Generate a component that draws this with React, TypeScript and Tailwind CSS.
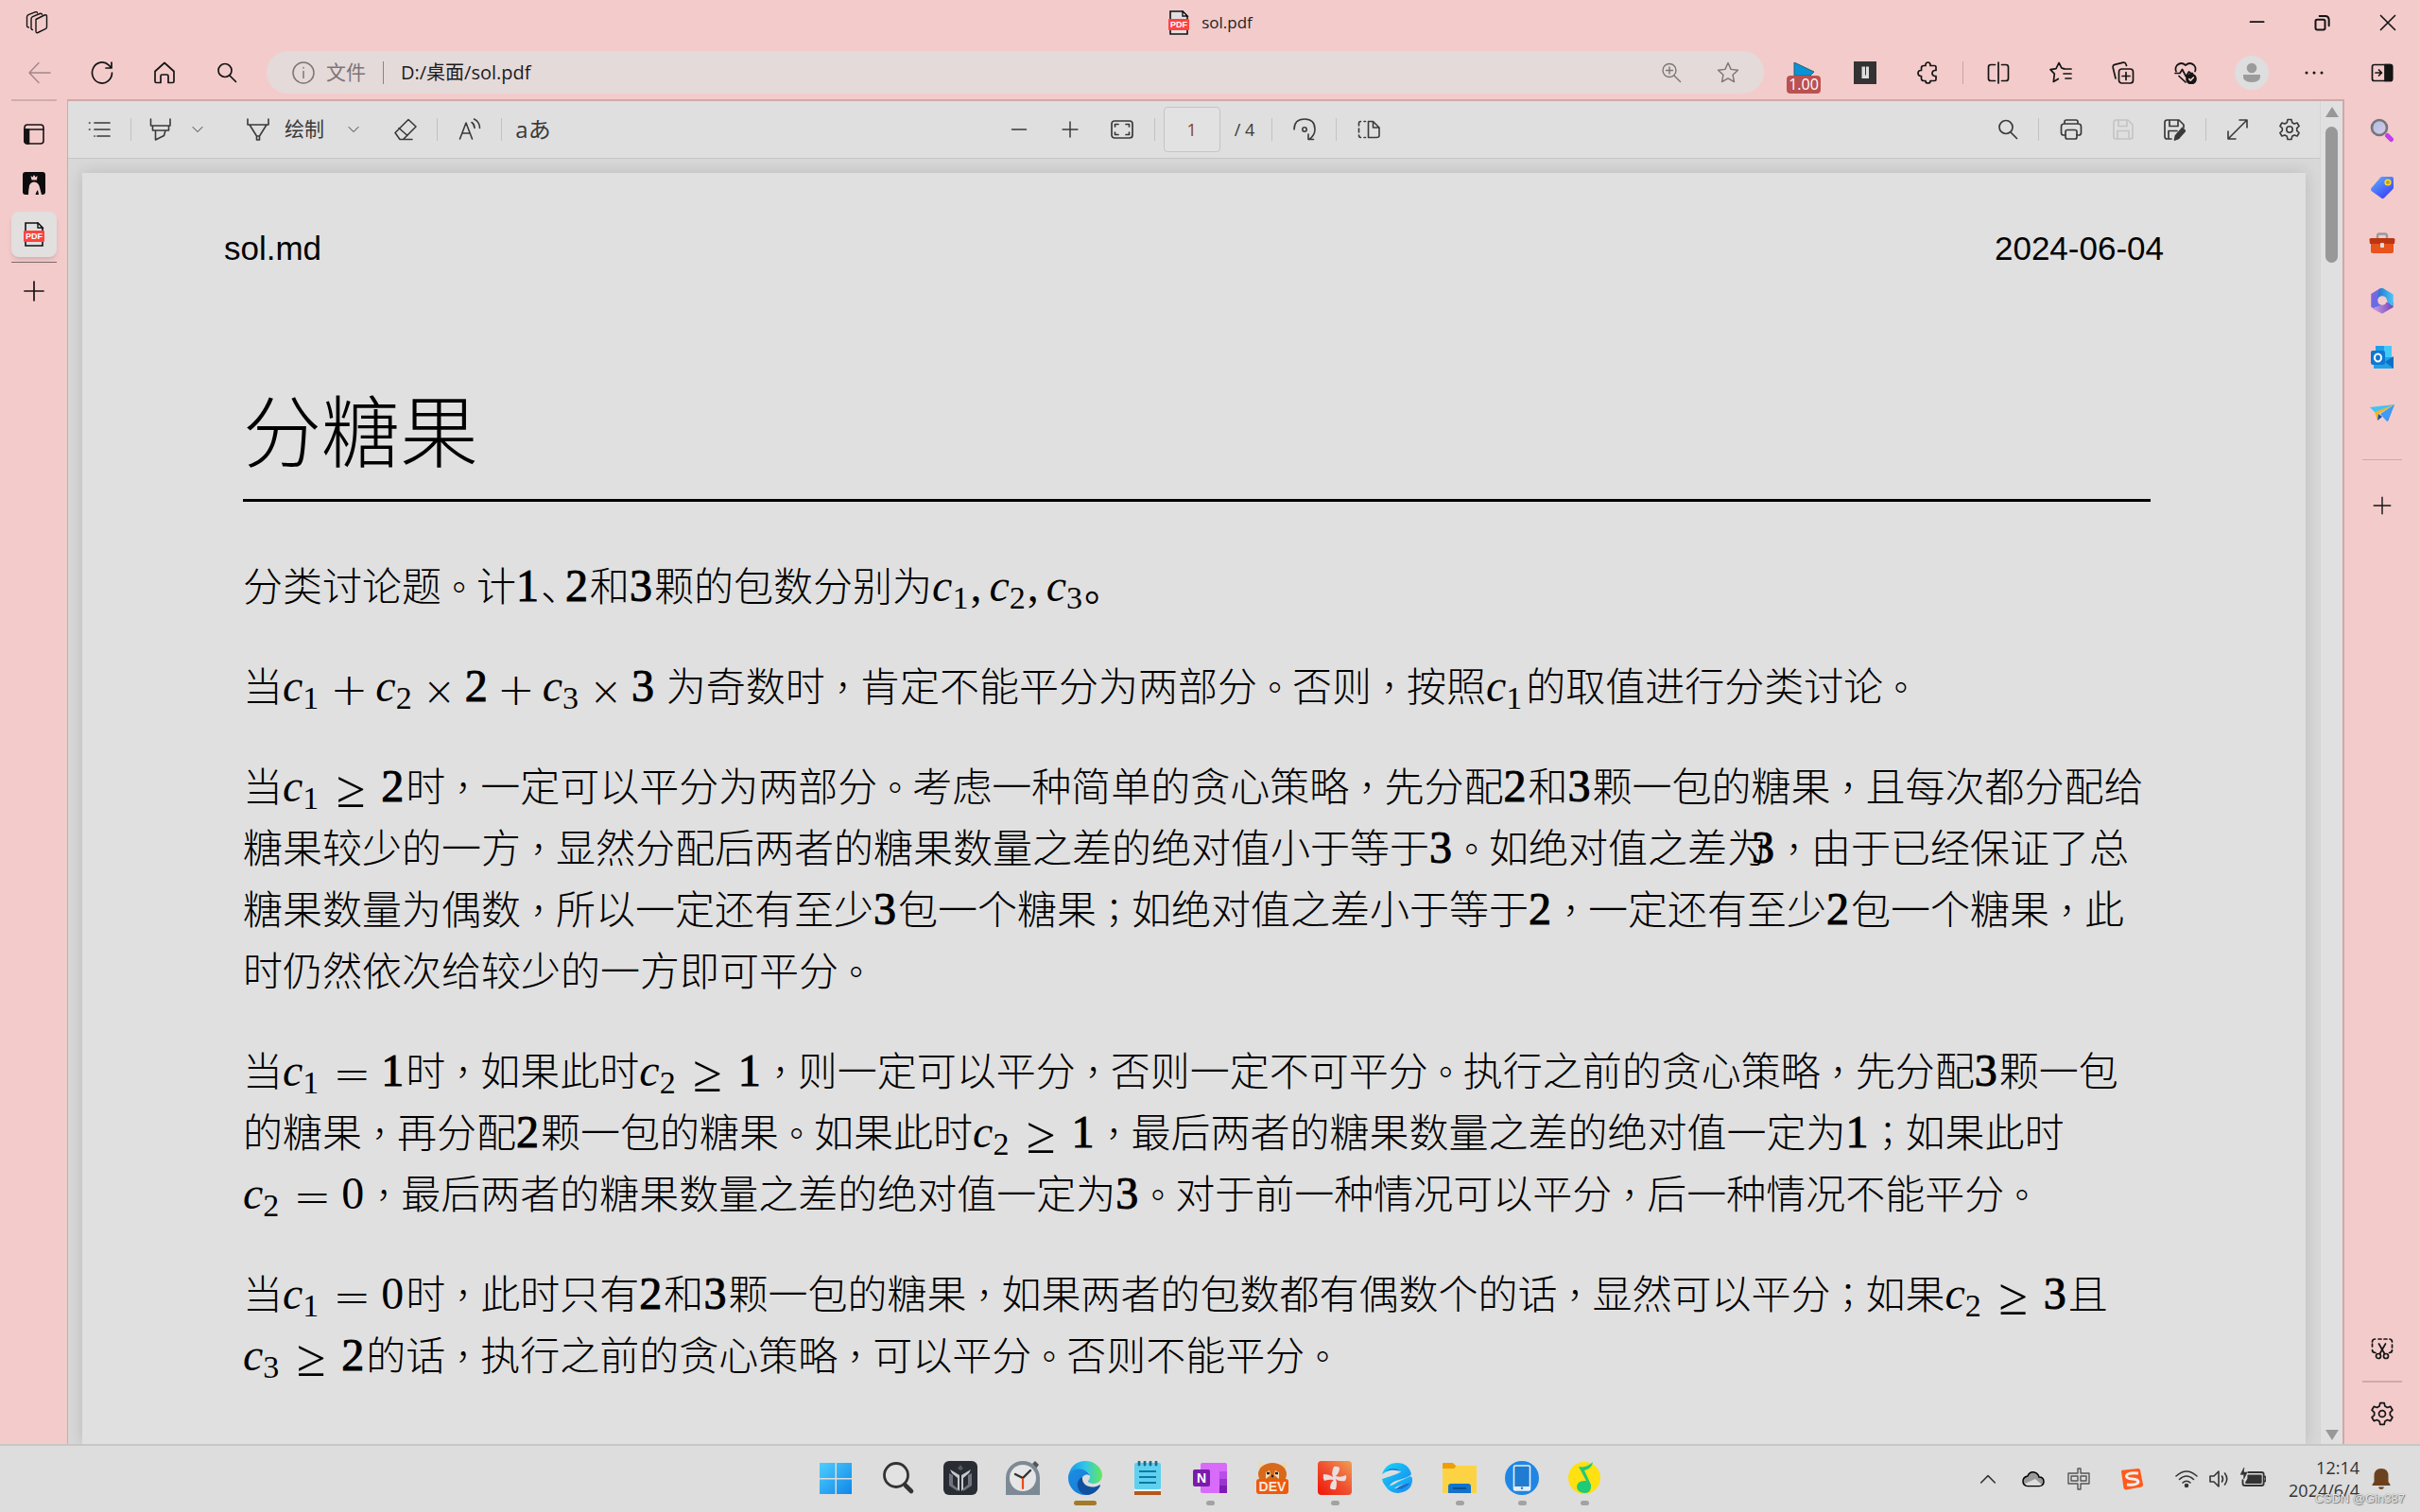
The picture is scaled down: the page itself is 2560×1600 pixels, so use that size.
import React from "react";

type IconProps = { children: React.ReactNode; size?: string; sw?: number; box?: string };

function Icon({ children, size = "size-6", sw = 1.4, box = "0 0 24 24" }: IconProps) {
  return (
    <svg viewBox={box} className={`${size} shrink-0`} fill="none" stroke="currentColor" strokeWidth={sw} strokeLinecap="round" strokeLinejoin="round" aria-hidden="true">
      {children}
    </svg>
  );
}

function Btn({ label, className, children }: { label: string; className: string; children: React.ReactNode }) {
  return (
    <button type="button" aria-label={label} className={`flex shrink-0 items-center justify-center ${className}`}>
      {children}
    </button>
  );
}

const Rule = ({ className }: { className: string }) => <span className={`shrink-0 ${className}`} />;

function PdfIcon() {
  return (
    <svg viewBox="0 0 24 26" className="h-[26px] w-6 shrink-0" aria-hidden="true">
      <path d="M3 1h13l5 5v19H3z" fill="#e0e0e0" stroke="#111" strokeWidth="1.6" />
      <path d="M16 1v5h5z" fill="#fff" stroke="#111" strokeWidth="1.4" />
      <rect x="1" y="9" width="22" height="12" rx="1" fill="#ff4340" />
      <text x="12" y="18.4" textAnchor="middle" fontSize="9" fontWeight="700" fill="#fff" fontFamily="Liberation Sans">PDF</text>
    </svg>
  );
}

const SearchGlyph = () => (
  <>
    <circle cx="10" cy="9.5" r="7" />
    <path d="M15 15l6.500 6.500" />
  </>
);

const Gear = () => (
  <>
    <path d="M10 1.500h4l.7 3.200 2.300 1.300 3.100-1 2 3.500-2.400 2.200v2.600l2.400 2.200-2 3.500-3.100-1-2.300 1.300-.7 3.200h-4l-.7-3.200L7 18l-3.100 1-2-3.500 2.400-2.200v-2.600L1.900 8.500l2-3.500L7 6l2.300-1.300z" />
    <circle cx="12" cy="12" r="3.200" />
  </>
);

const Star = () => <path d="M12 1.500l3.100 6.900 7.400.8-5.500 5 1.500 7.400L12 17.900l-6.500 3.700L7 14.200l-5.500-5 7.400-.8z" />;

function TitleBar() {
  return (
    <header className="grid h-12 shrink-0 grid-cols-[1fr_auto_1fr] items-center px-[6px] pr-0">
      <Btn label="工作区" className="h-12 w-[66px]">
        <Icon>
          <path d="M11 8.500l9-4.500q2.500-.8 2.500 1.500v11q0 1.500-1.500 2.200L13 22.500q-2 .8-2-1.500z" />
          <path d="M7.500 19.500q-1.500 0-1.500-2V8q0-1.500 1.500-2.300L15 2.500q2-.8 2.500.8M3.500 17Q1.500 17 1.500 15V6q0-1.500 1.500-2.300L10 .8q2-.8 2.500.8" />
        </Icon>
      </Btn>
      <div className="flex items-center justify-center gap-3 pr-[6px]">
        <PdfIcon />
        <h1 className="text-[17px] font-normal text-[#222]">sol.pdf</h1>
      </div>
      <div className="flex justify-end">
        <Btn label="最小化" className="h-12 w-[69px]"><Icon sw={2} size="size-5"><path d="M3 11h17" /></Icon></Btn>
        <Btn label="还原" className="h-12 w-[69px]">
          <Icon sw={2.4} size="size-5"><rect x="3" y="8" width="12" height="13" rx="2" /><path d="M8 3.500h7q5 0 5 5V16" /></Icon>
        </Btn>
        <Btn label="关闭" className="h-12 w-[69px]"><Icon sw={2} size="size-5"><path d="M3 3l18 18M21 3L3 21" /></Icon></Btn>
      </div>
    </header>
  );
}

function AddressRow() {
  return (
    <nav className="flex h-[57px] shrink-0 items-center pr-[7px] pl-[9px]">
      <Btn label="后退" className="h-11 w-[66px] text-[#a28789]"><Icon><path d="M23 12H1M11 1.500L1 12l10 10.500" /></Icon></Btn>
      <Btn label="刷新" className="h-11 w-[66px]"><Icon sw={1.7}><path d="M22.500 12A10.500 11 0 1 1 19 3.800l2.500 2.700M22 1v6h-6" /></Icon></Btn>
      <Btn label="主页" className="h-11 w-[66px]"><Icon sw={1.7}><path d="M2 10.500L12 1.500l10 9V21q0 1.500-1.500 1.500H16v-7q0-1.500-1.500-1.500h-5Q8 14 8 15.500v7H3.500Q2 22.500 2 21z" /></Icon></Btn>
      <Btn label="搜索" className="h-11 w-[66px]"><Icon sw={1.7}><SearchGlyph /></Icon></Btn>
      <div className="ml-[9px] flex h-[45px] flex-1 items-center rounded-full bg-[#e4dada] pr-1 pl-[27px] text-[#7d7475]">
        <Icon sw={1.5}><circle cx="12" cy="12" r="11" /><path d="M12 10.500v7M12 6.500v.4" /></Icon>
        <span className="ml-3 text-[21px]">文件</span>
        <Rule className="mx-[18px] h-6 w-px bg-[#8c8283]" />
        <input aria-label="地址" defaultValue="D:/桌面/sol.pdf" className="min-w-0 flex-1 bg-transparent text-xl text-[#1b1b1b] outline-none" />
        <Btn label="缩放" className="h-11 w-[60px]"><Icon><SearchGlyph /><path d="M10 6v7M6.500 9.500h7" /></Icon></Btn>
        <Btn label="收藏此页" className="mr-1 h-11 w-[60px]"><Icon><Star /></Icon></Btn>
      </div>
      <Btn label="视频速度" className="ml-[10px] h-12 w-[64px] flex-col">
        <svg viewBox="0 0 22 14" className="mt-3 h-[14px] w-[22px] shrink-0" aria-hidden="true"><path d="M1 0l21 10-4 4H1z" fill="#0a93d4" stroke="#25607c" /></svg>
        <span className="rounded bg-[#bb5151] px-[2px] text-base leading-[19px] text-white">1.00</span>
      </Btn>
      <Btn label="扩展 L" className="h-11 w-[66px]">
        <svg viewBox="0 0 24 24" className="size-6 shrink-0" aria-hidden="true"><rect width="24" height="24" fill="#333" /><path d="M8.500 5.500h3.500v9h1v-9h3V18H8.500z" fill="#ddd" /></svg>
      </Btn>
      <Btn label="扩展" className="h-11 w-[66px]">
        <Icon sw={1.7}><path d="M8 4.500h2v-.7Q10 1 12.500 1T15 3.800v.7h4.500Q21 4.500 21 6v3.500h-1.500q-2.500.5-2.500 3t2.500 3H21V19q0 1.500-1.500 1.500H15v.5q0 2-2.500 2T10 21v-.5H8Q5.500 20.500 5.500 18v-2.500H4.800Q2 15.500 2 12.500t2.800-3h.7V7q0-2.500 2.500-2.500z" /></Icon>
      </Btn>
      <Rule className="mx-1 h-6 w-px bg-[#c3a5a6]" />
      <Btn label="分屏" className="h-11 w-[66px]">
        <Icon sw={1.7}><path d="M12 1v22M8.500 3.500H4q-2.500 0-2.500 2.500v12Q1.500 20.500 4 20.500h4.500M15.500 3.500H20q2.500 0 2.500 2.500v12q0 2.500-2.500 2.500h-4.500" /></Icon>
      </Btn>
      <Btn label="收藏夹" className="h-11 w-[66px]">
        <Icon sw={1.7}><path d="M15.500 7.500l-2.500-.3-3-5.700-3 6.200-6 .9 4.300 4.600-1 8.300 5-3M15 8h8M15 13h8M17 18h6" /></Icon>
      </Btn>
      <Btn label="集锦" className="h-11 w-[66px]">
        <Icon sw={1.7}><rect x="7.500" y="8" width="15" height="15" rx="3" /><path d="M15 11.500v8M11 15.500h8M4 18L1.200 6.500Q.8 4 3 3.400L12 1.200q2.500-.4 3 1.800l.5 1.500" /></Icon>
      </Btn>
      <Btn label="浏览器概要" className="mr-1 h-11 w-[66px]">
        <Icon sw={1.7}><path d="M2 10.500Q.5 7 3 4q4.500-4 9 0 4.500-4 9 0 2.500 3 1 6.500M1 12.500h5l2.500-4 4 7.500 3-5 2 1.500h2M5 15.500l7 6.500" /><circle cx="18" cy="18.500" r="5" fill="currentColor" /><path d="M15.800 18.700l1.500 1.500 3-3.200" stroke="#f4cbcb" /></Icon>
      </Btn>
      <Btn label="个人资料" className="h-11 w-[66px]">
        <svg viewBox="0 0 36 36" className="size-9 shrink-0" aria-hidden="true"><circle cx="18" cy="18" r="18" fill="#dedede" /><circle cx="18" cy="13" r="5.300" fill="#9b9b9b" /><path d="M9 20h18q1 8-9 8t-9-8z" fill="#9b9b9b" /></svg>
      </Btn>
      <Btn label="设置及其他" className="h-11 w-[66px]"><Icon sw={3}><path d="M4 12h.01M12 12h.01M20 12h.01" /></Icon></Btn>
      <Btn label="侧边栏" className="ml-[6px] h-11 w-[66px]">
        <Icon sw={1.7}><rect x="1.500" y="3.500" width="21" height="17" rx="2" /><path d="M15 3.500h6q1.500 0 1.500 2v13q0 2-1.500 2h-6z" fill="currentColor" /><path d="M5 12h6M8.500 9l3 3-3 3" /></Icon>
      </Btn>
    </nav>
  );
}

function TabStrip() {
  return (
    <aside className="flex w-[71px] shrink-0 flex-col items-center">
      <Rule className="h-[2px] w-12 bg-[#d0adad]" />
      <Btn label="垂直标签页" className="mt-[9px] h-[52px] w-12">
        <Icon sw={1.6}><rect x="2" y="2" width="20" height="20" rx="3" /><path d="M2 7h20" /><path d="M2 7h4.500v15H5q-3 0-3-3z" fill="currentColor" /></Icon>
      </Btn>
      <Btn label="标签页" className="h-[52px] w-12">
        <svg viewBox="0 0 24 24" className="size-6 shrink-0" aria-hidden="true"><rect width="24" height="24" rx="3" fill="#0c0c0c" /><path d="M6 24q0-5 1-9 .5-4 5-4.500 5 .5 6 6l2 7.500h-3l-1-5q-2 2-2.500 5z M6 24l1-10h5v3l-3 7z M8.500 4l2 1.500L12 3l1.500 2.500L15.500 4 15 8.500H9.500z" fill="#f4cbcb" /></svg>
      </Btn>
      <Btn label="sol.pdf" className="mt-1 h-12 w-12 rounded-lg bg-[#e2dfdf] shadow-md"><PdfIcon /></Btn>
      <Rule className="mt-[5px] h-px w-12 bg-[#82696a]" />
      <Btn label="新建标签页" className="mt-1 h-[52px] w-12"><Icon sw={1.7}><path d="M12 2v20M2 12h20" /></Icon></Btn>
    </aside>
  );
}

const Sep = () => <Rule className="h-6 w-px bg-[#c2c2c2]" />;
const Chevron = () => <Icon size="size-3" sw={2}><path d="M2 7l10 10L22 7" /></Icon>;

function PdfToolbar() {
  return (
    <div className="flex h-[61px] w-full shrink-0 items-center border-b border-[#c6c6c6] bg-[#dfdfdf] text-[#3a3a3a]">
      <div className="flex flex-1 items-center">
        <Btn label="目录" className="h-12 w-[66px]"><Icon sw={1.7}><path d="M7 5h16M7 12h16M10 19h13M1.500 5h.5M1.500 12h.5M7 19h.2" /></Icon></Btn>
        <Sep />
        <Btn label="突出显示" className="h-12 w-[62px]">
          <Icon sw={1.6}><path d="M1.500 1v7H22V1M3.500 8.500v4.500h17V8.500M6.500 13v10l9-4.500 1.500-5.500" /></Icon>
        </Btn>
        <Btn label="突出显示选项" className="h-12 w-4"><Chevron /></Btn>
        <Btn label="绘制" className="ml-[44px] h-12 gap-[16px] text-[21px]">
          <Icon sw={1.6}><path d="M1 1v6h22V1M3 7l7.500 12h3L21 7M10.500 19v4h3v-4" /></Icon>
          <span>绘制</span>
        </Btn>
        <Btn label="绘制选项" className="ml-[21px] h-12 w-5"><Chevron /></Btn>
        <Btn label="擦除" className="ml-3 h-12 w-[66px]"><Icon sw={1.6}><path d="M15 1.500L23 9 9.500 22.500H6L1 15.500zM5 10.500l9 8M9 22.500h10" /></Icon></Btn>
        <Sep />
        <Btn label="大声朗读" className="h-12 w-[67px]"><Icon sw={1.6}><path d="M1.500 22L8 5l6.500 17M4 16h8M14 4.500q3 2 3 6M16.500 1q6 3 6 9.500" /></Icon></Btn>
        <Sep />
        <Btn label="翻译" className="h-12 w-[66px] text-2xl"><span>aあ</span></Btn>
      </div>
      <div className="flex items-center pl-[6px]">
        <Btn label="缩小" className="h-12 w-[54px]"><Icon size="size-5" sw={1.8}><path d="M3 12h18" /></Icon></Btn>
        <Btn label="放大" className="h-12 w-[54px]"><Icon size="size-5" sw={1.8}><path d="M12 2.500v19M2.500 12h19" /></Icon></Btn>
        <Btn label="适应页面" className="h-12 w-[56px]">
          <Icon sw={1.7}><rect x="1" y="3" width="22" height="18" rx="3" /><path d="M4.500 9V6.500H8M16 6.500h3.500V9M19.500 15v2.500H16M8 17.500H4.500V15" /></Icon>
        </Btn>
        <Rule className="mx-[6px] h-6 w-px bg-[#c2c2c2]" />
        <input aria-label="页码" defaultValue="1" className="mx-[3px] h-12 w-[60px] rounded border border-[#c4c4c4] bg-[#e2e2e2] text-center text-lg text-[#8a3f12] outline-none" />
        <span className="ml-3 text-lg">/ 4</span>
        <Rule className="ml-[18px] h-6 w-px bg-[#c2c2c2]" />
        <Btn label="旋转" className="h-12 w-[67px]">
          <Icon sw={1.6}><path d="M1 12Q1 1 12 1t11 11q0 6-6 10.500M16 17v5.500h5.500" /><circle cx="12" cy="12" r="2.200" /></Icon>
        </Btn>
        <Sep />
        <Btn label="页面视图" className="h-12 w-[67px]">
          <Icon sw={1.6}><path d="M11.500 3.500V20.500H20q3 0 3-2V10l-6.500-6.500zM16.500 3.500V10H23M8.500 3.500H7M3.500 3.500q-2 0-2 2V8M1.500 11v4M1.500 18q0 2.500 2 2.500M7 20.500h1.500" /></Icon>
        </Btn>
      </div>
      <div className="flex flex-1 items-center justify-end">
        <Btn label="查找" className="h-12 w-16"><Icon sw={1.7}><SearchGlyph /></Icon></Btn>
        <Sep />
        <Btn label="打印" className="ml-[6px] h-12 w-14">
          <Icon sw={1.7}><path d="M5 6V4q0-2 2-2h10q2 0 2 2v2M6 18H4q-2.500 0-2.500-2.500V9Q1.500 6 4.500 6h15q3 0 3 3v6.500q0 2.500-2.500 2.500h-2" /><rect x="6" y="12.500" width="12" height="9.500" rx="2" /></Icon>
        </Btn>
        <Btn label="保存" className="h-12 w-[54px] text-[#c4c4c4]">
          <Icon sw={1.6}><path d="M4.500 2H17l5 5v12.500q0 2.500-2.500 2.500h-15Q2 22 2 19.500v-15Q2 2 4.500 2zM7 2v6.500h9V2M6 22v-8.500h12V22" /></Icon>
        </Btn>
        <Btn label="另存为" className="h-12 w-[54px]">
          <Icon sw={1.7}><path d="M9 22H4.500Q2 22 2 19.500v-15Q2 2 4.500 2H17l5 5v3M7 2v6.500h9V2M6 22v-8.500h9" /><path d="M12.500 23l1-4.500 7-8 3 3-7 8z" fill="currentColor" /></Icon>
        </Btn>
        <Rule className="ml-[6px] h-6 w-px bg-[#c2c2c2]" />
        <Btn label="全屏" className="h-12 w-[66px]"><Icon sw={1.6}><path d="M2 22L22 2M14 2h8v8M2 14v8h8" /></Icon></Btn>
        <Btn label="设置" className="mr-[10px] h-12 w-[44px]"><Icon sw={1.6}><Gear /></Icon></Btn>
      </div>
    </div>
  );
}

/* Braces hold a formula: c1 is a variable with its index, the rest are numbers and operators. */
function Formula({ source }: { source: string }) {
  const tokens = source.match(/c\d|\d|./g) ?? [];
  return (
    <span className="mr-[2px] font-['Liberation_Serif'] text-[48px] leading-none">
      {tokens.map((t, i) => {
        if (t.length === 2)
          return (
            <React.Fragment key={i}>
              <i>c</i>
              <sub className="static mr-[2px] align-[-8px] text-[34px] leading-none">{t[1]}</sub>
            </React.Fragment>
          );
        if (t === "≥")
          return <span key={i} className="mx-[13px] inline-flex h-8 w-[38px] items-center justify-center align-[-6px] font-['DejaVu_Sans'] text-[56px] leading-8 font-extralight">{t}</span>;
        if (t === "=")
          return <span key={i} className="mx-[13px] inline-block h-8 w-[38px] text-center align-[-4px] font-['DejaVu_Sans'] text-[48px] leading-8 font-extralight">{t}</span>;
        if (t === "+")
          return <span key={i} className="mx-[10px] inline-block h-8 w-[38px] text-center align-[-4px] font-['DejaVu_Sans'] text-[48px] leading-8 font-extralight">{t}</span>;
        if (t === "×")
          return <span key={i} className="mx-2 inline-block h-8 w-[38px] text-center align-[-4px] font-['DejaVu_Sans'] text-[42px] leading-8 font-extralight">{t}</span>;
        if (t === ",") return <span key={i} className="mr-2">,</span>;
        if (t === "<") return <span key={i} className="-ml-4" />;
        if (t === "。") return <span key={i} className="text-[42px] leading-none">。</span>;
        if (t === "0") return <span key={i}>0</span>;
        return <span key={i} className="[-webkit-text-stroke:1px]">{t}</span>;
      })}
    </span>
  );
}

function Line({ source }: { source: string }) {
  const parts = source.split(/(\{[^}]*\}|[，。；、])/).filter(Boolean);
  return (
    <span className="block">
      {parts.map((p, i) => {
        if (p[0] === "{") return <Formula key={i} source={p.slice(1, -1)} />;
        if (p === "、") return <span key={i} className="-mr-4">{p}</span>;
        if ("，。；".includes(p)) return <span key={i} lang="zh-TW" className="font-['Noto_Sans_CJK_TC'] text-[37px] leading-none">{p}</span>;
        return p;
      })}
    </span>
  );
}

const paragraphs = [
  ["分类讨论题。计{1}、{2}和{3}颗的包数分别为{c1,c2,c3。}"],
  ["当{c1+c2×2+c3×3} 为奇数时，肯定不能平分为两部分。否则，按照{c1}的取值进行分类讨论。"],
  [
    "当{c1≥2}时，一定可以平分为两部分。考虑一种简单的贪心策略，先分配{2}和{3}颗一包的糖果，且每次都分配给",
    "糖果较少的一方，显然分配后两者的糖果数量之差的绝对值小于等于{3}。如绝对值之差为{<3}，由于已经保证了总",
    "糖果数量为偶数，所以一定还有至少{3}包一个糖果；如绝对值之差小于等于{2}，一定还有至少{2}包一个糖果，此",
    "时仍然依次给较少的一方即可平分。",
  ],
  [
    "当{c1=1}时，如果此时{c2≥1}，则一定可以平分，否则一定不可平分。执行之前的贪心策略，先分配{3}颗一包",
    "的糖果，再分配{2}颗一包的糖果。如果此时{c2≥1}，最后两者的糖果数量之差的绝对值一定为{1}；如果此时",
    "{c2=0}，最后两者的糖果数量之差的绝对值一定为{3}。对于前一种情况可以平分，后一种情况不能平分。",
  ],
  [
    "当{c1=0}时，此时只有{2}和{3}颗一包的糖果，如果两者的包数都有偶数个的话，显然可以平分；如果{c2≥3}且",
    "{c3≥2}的话，执行之前的贪心策略，可以平分。否则不能平分。",
  ],
];

function Document() {
  return (
    <main className="min-h-0 flex-1 overflow-hidden bg-[#d8d8d8] px-[15px] pt-[15px]">
      <article className="min-h-full bg-[#e0e0e0] px-[150px] pt-[59px] text-black shadow-[0_0_16px_rgba(0,0,0,0.14)]">
        <header className="flex justify-between font-['Liberation_Sans'] text-[35px] leading-[42px]">
          <span>sol.md</span>
          <time>2024-06-04</time>
        </header>
        <div className="pr-[14px] pl-5">
          <h2 className="mt-[110px] border-b-[3px] border-black pb-[10px] text-[83px] leading-[124px] font-light">分糖果</h2>
          {paragraphs.map((lines, i) => (
            <p key={i} className={`text-[42px] leading-[65px] font-light whitespace-nowrap ${i === 0 ? "mt-14" : "mt-[41px]"}`}>
              {lines.map((l) => <Line key={l} source={l} />)}
            </p>
          ))}
        </div>
      </article>
    </main>
  );
}

function Scrollbar() {
  return (
    <div className="flex w-6 shrink-0 flex-col items-center border-l border-[#d4d4d4] bg-[#e0e0e0] text-[#989898]">
      <svg viewBox="0 0 14 12" className="mt-[6px] h-[12px] w-[14px]" aria-hidden="true"><path d="M7 0l7 11H0z" fill="currentColor" /></svg>
      <span className="mt-[9px] h-36 w-[13px] rounded-full bg-[#989898]" />
      <svg viewBox="0 0 14 12" className="mt-auto mb-1 h-[12px] w-[14px]" aria-hidden="true"><path d="M7 12l7-11H0z" fill="currentColor" /></svg>
    </div>
  );
}

function EdgeSidebar() {
  return (
    <aside className="flex w-[82px] shrink-0 flex-col items-center border-l-2 border-[#cfa9a9] bg-[#f4cbcb] pt-[3px]">
      <Btn label="搜索" className="h-[60px] w-12">
        <svg viewBox="0 0 26 26" className="size-[26px]" aria-hidden="true">
          <defs><linearGradient id="lens" x2="1" y2="1"><stop stopColor="#a9bde4" /><stop offset="1" stopColor="#dccbe6" /></linearGradient></defs>
          <circle cx="10" cy="10" r="8" fill="url(#lens)" stroke="#75757a" strokeWidth="2.600" /><path d="M18.500 18.500l4 4" stroke="#c33cf0" strokeWidth="5" strokeLinecap="round" />
        </svg>
      </Btn>
      <Btn label="购物" className="h-[60px] w-12">
        <svg viewBox="0 0 26 26" className="size-[26px]" aria-hidden="true">
          <defs><linearGradient id="tag" x2=".7" y2="1"><stop stopColor="#62b4ff" /><stop offset="1" stopColor="#3941f5" /></linearGradient></defs>
          <path d="M13 2h10q2 0 2 2v9q0 1.500-1 2.500l-9 9q-1.500 1.500-3 0L1.500 17q-1-1.500 0-3L11 3q1-1 2-1z" fill="url(#tag)" /><circle cx="19" cy="8" r="2.800" fill="#bfa02a" stroke="#ffd91f" strokeWidth="1.600" />
        </svg>
      </Btn>
      <Btn label="工具" className="h-[60px] w-12">
        <svg viewBox="0 0 28 26" className="h-[26px] w-7" aria-hidden="true">
          <path d="M9 8V5q0-2.500 2-2.500h6Q19 2.500 19 5v3" fill="none" stroke="#999" strokeWidth="2.400" /><path d="M2 12h24v9q0 2-2 2H4q-2 0-2-2z" fill="#e9531c" /><path d="M2 7h24q1.500 0 1.500 1.500L27 13H1L.5 8.500Q.5 7 2 7z" fill="#bd3510" /><rect x="12" y="12" width="4" height="5" rx=".8" fill="#ddd" />
        </svg>
      </Btn>
      <Btn label="Microsoft 365" className="h-[60px] w-12">
        <svg viewBox="0 0 26 28" className="h-7 w-[26px]" aria-hidden="true">
          <defs>
            <linearGradient id="ma" y2="1"><stop stopColor="#8b62dd" /><stop offset="1" stopColor="#4e74e8" /></linearGradient>
            <linearGradient id="mb" x2="1"><stop stopColor="#2478d0" /><stop offset="1" stopColor="#4ac3f5" /></linearGradient>
            <linearGradient id="mc" x2="1"><stop stopColor="#c59be6" /><stop offset="1" stopColor="#7648b8" /></linearGradient>
          </defs>
          <g strokeWidth="1.500" strokeLinejoin="round">
            <path d="M11 2L2 7.500v13L5 22.500 12 20 9 12z" fill="url(#ma)" stroke="url(#ma)" />
            <path d="M4 22.500L13 27l11-6.500V16l-6 .5L11 20z" fill="url(#mc)" stroke="url(#mc)" />
            <path d="M10.500 2.500L13 1.500l11 6.500v11l-4-3-3-6-8 1z" fill="url(#mb)" stroke="url(#mb)" />
          </g>
          <circle cx="13" cy="14" r="4.800" fill="#f4cbcb" />
        </svg>
      </Btn>
      <Btn label="Outlook" className="h-[60px] w-12">
        <svg viewBox="0 0 26 26" className="size-[26px]" aria-hidden="true">
          <path d="M6 1h17v12H6z" fill="#44c8f5" /><path d="M6 1h9v7H6z" fill="#1f9ee8" /><path d="M4 13h21v12H4z" fill="#1fa2e8" /><path d="M25 12l-9 6 9 7z" fill="#0d6fc4" /><rect x="1" y="6" width="15" height="15" rx="2" fill="#0f78d4" /><ellipse cx="8.500" cy="13.500" rx="3.500" ry="4" fill="none" stroke="#fff" strokeWidth="2" />
        </svg>
      </Btn>
      <Btn label="放置" className="h-[60px] w-12">
        <svg viewBox="0 0 28 22" className="h-[22px] w-7" aria-hidden="true">
          <path d="M1 4l26-3-18 10-3-2z" fill="#3ec4fa" /><path d="M27 1L20 19l-5-5z" fill="#2e86f0" /><path d="M12 11l15-10-8 18z" fill="#3d9cf8" /><path d="M6 9L27 1 10 11l-1 7z" fill="#f9b218" /><path d="M10 11l4 3-5 4z" fill="#184fb0" />
        </svg>
      </Btn>
      <Rule className="mt-[18px] h-px w-[42px] bg-[#cfa9a9]" />
      <Btn label="自定义" className="mt-[18px] h-[60px] w-12"><Icon size="size-5" sw={1.7}><path d="M12 1.500v21M1.500 12h21" /></Icon></Btn>
      <Btn label="屏幕截图" className="mt-auto h-[52px] w-12">
        <Icon sw={1.7}><path d="M5 16.500q-3.500 0-3.500-3M1.500 10V7M1.500 5q0-3 3-3M8 2h3M14 2h3M20 2q2.500.3 2.500 3M22.500 8v3M22.500 13.500q0 3-3 3M8.500 7l6 10.500M15.500 7L9.500 17.500" /><circle cx="8" cy="20" r="2.500" /><circle cx="16" cy="20" r="2.500" /></Icon>
      </Btn>
      <Rule className="mt-2 h-[2px] w-[42px] bg-[#cfa9a9]" />
      <Btn label="设置" className="mt-[7px] mb-[6px] h-[52px] w-12"><Icon size="size-[26px]" sw={1.6}><Gear /></Icon></Btn>
    </aside>
  );
}

const apps: { name: string; state?: "active" | "open"; art: React.ReactNode }[] = [
  {
    name: "开始",
    art: (
      <>
        <defs><linearGradient id="win" x2="1" y2="1" gradientUnits="objectBoundingBox"><stop stopColor="#4dcfff" /><stop offset="1" stopColor="#0f86e8" /></linearGradient></defs>
        <path d="M1 2h16.500v16H1zM19 2h16v16H19zM1 19.500h16.500V35H1zM19 19.500h16V35H19z" fill="url(#win)" />
      </>
    ),
  },
  { name: "搜索", art: <g fill="none" stroke="#333"><circle cx="16" cy="15" r="12.500" fill="#e2e2e2" strokeWidth="2.800" /><path d="M26 26l6 6" strokeWidth="4.600" strokeLinecap="round" /></g> },
  {
    name: "游戏工具",
    art: (
      <>
        <rect x="0" y="0" width="36" height="36" rx="6" fill="#292c33" />
        <path d="M18 4l3 4-3 2-3-2z" fill="#555b66" />
        <path d="M6 13l4 2v10l5 4v3l-9-6zM30 13l-4 2v10l-5 4v3l9-6z" fill="#6f747f" />
        <path d="M7 9l10 6v17l-2-2V18L9 13zM29 9l-10 6v17l2-2V18l6-5z" fill="#c6c8cc" />
      </>
    ),
  },
  {
    name: "时钟",
    art: (
      <>
        <path d="M28 3l3-3 4 4-3 4z" fill="#555" /><path d="M0 36V18a18 18 0 0 1 36 0v18z" fill="#7d8a95" /><circle cx="18" cy="18" r="14" fill="#e6e6e6" />
        <path d="M10 14l8 4 8-8" fill="none" stroke="#333" strokeWidth="2.400" strokeLinecap="round" /><path d="M18 19v10" stroke="#f04a13" strokeWidth="2.200" strokeLinecap="round" />
      </>
    ),
  },
  {
    name: "Edge",
    state: "active",
    art: (
      <>
        <defs>
          <linearGradient id="ea" x2="1"><stop stopColor="#1496e8" /><stop offset=".5" stopColor="#32c5e8" /><stop offset="1" stopColor="#66e85a" /></linearGradient>
          <linearGradient id="eb" y2="1"><stop stopColor="#1b8ee0" /><stop offset="1" stopColor="#1479d8" /></linearGradient>
        </defs>
        <path d="M0 18C1 6 9 0 18 0c11 0 18 8 18 15 0 5-4 9-9 9-3 0-6-1-6-2.500 0-1 2-2 2-5 0-4-4-7-9-7C7 9.500 1 13 0 18z" fill="url(#ea)" />
        <path d="M0 18c0-6 6-10 12-9.500C18 9 22 12 23 16c-3-3-9-1-9 5 0 7 6 13 13 12-3 2-6 3-9 3C8 36 0 28 0 18z" fill="url(#eb)" />
        <path d="M15 17c-4 2-6 6-5 10 1 5 5 9 11 9 6-1 11-5 13-10 0-1-1-1-2 0-8 4-18 0-17-9z" fill="#10509f" />
      </>
    ),
  },
  {
    name: "记事本",
    art: (
      <>
        <path d="M4 31h28v5H4z" fill="#b5571a" /><path d="M4 30h28v2H4z" fill="#f2f2f2" /><rect x="4" y="2" width="28" height="28" rx="2" fill="#60d0ee" />
        <path d="M9 11h18M9 17h18M9 23h18" stroke="#087aa5" strokeWidth="2" /><path d="M9 1v3M15 1v3M21 1v3M27 1v3" stroke="#156e90" strokeWidth="2.800" strokeLinecap="round" />
      </>
    ),
  },
  {
    name: "OneNote",
    state: "open",
    art: (
      <>
        <rect x="8" y="2" width="28" height="32" rx="2" fill="#d96bfb" /><path d="M28 11h8v8h-8z" fill="#b84de8" /><path d="M28 19h8v7h-8z" fill="#9a34cc" /><path d="M28 26h8v8h-8z" fill="#7d1bb5" /><rect x="0" y="9" width="18" height="18" rx="2" fill="#7a1bad" />
        <text x="9" y="23" textAnchor="middle" fontSize="14" fontWeight="700" fill="#fff" fontFamily="Liberation Sans">N</text>
      </>
    ),
  },
  {
    name: "DEV",
    art: (
      <>
        <path d="M3 1l9 4-7 8zM33 1l-9 4 7 8z" fill="#efd8a8" /><ellipse cx="18" cy="14" rx="15" ry="12" fill="#d9691a" /><path d="M11 12l4-2 1 5-5 4zM25 12l-4-2-1 5 5 4z" fill="#f5dfb8" /><path d="M12 13h3M21 13h3M17 16h2" stroke="#222" strokeWidth="2.400" /><rect x="1" y="19" width="34" height="16" rx="3" fill="#ef5a0c" />
        <text x="18" y="32" textAnchor="middle" fontSize="14" fontWeight="700" fill="#f4e8dc" fontFamily="Liberation Sans">DEV</text>
      </>
    ),
  },
  {
    name: "Xmind",
    state: "open",
    art: (
      <>
        <defs><linearGradient id="xm" x1="1" y2="1" x2="0"><stop stopColor="#f0a056" /><stop offset=".5" stopColor="#f05030" /><stop offset="1" stopColor="#f01408" /></linearGradient></defs>
        <rect width="36" height="36" rx="4" fill="url(#xm)" />
        <path d="M17 6q3-1 6 1 0 6-4 9 5 2 11-1 1 3-1 6-7 1-10-2 2 5 0 11-3 1-6-1 0-6 4-9-5-1-10 1-2-3-1-7 6 0 10 3-2-5 1-11z" fill="#eadddd" />
      </>
    ),
  },
  {
    name: "浏览器",
    art: (
      <>
        <defs><linearGradient id="br" y2="1"><stop stopColor="#18d9f4" /><stop offset="1" stopColor="#1683f5" /></linearGradient></defs>
        <path d="M2 14Q6 2 18 2q12 0 15 12-2 3-13 6-9 2-11 8-6-2-7-9 3-1 12-4 8-3 8-4-7-5-20 3z" fill="url(#br)" />
        <path d="M34 18q1 14-15 16-9 0-14-8 5 2 14-4l13-6zM15 29q11 2 18-6l-6 1q-8 2-12 5z" fill="url(#br)" />
        <path d="M16 30q10 1 17-7-8 0-17 7zM5 11q9-6 17 0Q12 8 5 11z" fill="#1273d4" />
      </>
    ),
  },
  {
    name: "文件资源管理器",
    state: "open",
    art: (
      <>
        <path d="M0 3q0-1 1-1h10l4 4-3 3H0z" fill="#ee9f07" /><path d="M0 8h12l3-3h20q1 0 1 1v28H0z" fill="#fdd343" /><path d="M6 34V27q0-3 3-3h18q3 0 3 3v7z" fill="#1173cc" /><path d="M11 29h14" stroke="#0b4f93" strokeWidth="2" />
      </>
    ),
  },
  {
    name: "手机助手",
    state: "open",
    art: (<><circle cx="18" cy="18" r="18" fill="#2086e3" /><rect x="9.500" y="5" width="17" height="26" rx="1.500" fill="#1f7cd0" stroke="#e8eef5" strokeWidth="1.600" /><path d="M9 27h18v4H9z" fill="#e8eef5" /><circle cx="18" cy="28.800" r="1.200" fill="#1f7cd0" /></>),
  },
  {
    name: "QQ音乐",
    state: "open",
    art: (<><circle cx="18" cy="18" r="17" fill="#ffe010" /><path d="M12 6q8 2 15-5-1 6-6 8l-3 1 7 15q1 9-7 9-8-1-8-7 1-7 10-6L12 6z" fill="#1fca78" /></>),
  },
];

function Taskbar() {
  return (
    <footer className="grid h-[72px] shrink-0 grid-cols-[1fr_auto_1fr] items-center border-t-2 border-[#c6c6c6] bg-[#dddddd]">
      <span />
      <div className="flex">
        {apps.map((a) => (
          <button key={a.name} type="button" aria-label={a.name} className="flex h-[66px] w-[66px] flex-col items-center pt-[14px]">
            <svg viewBox="0 0 36 36" className="size-9" aria-hidden="true">{a.art}</svg>
            {a.state === "active" && <span className="mt-[6px] h-[5px] w-6 rounded-full bg-[#a3792a]" />}
            {a.state === "open" && <span className="mt-[6px] h-[5px] w-[9px] rounded-full bg-[#a2a2a2]" />}
          </button>
        ))}
      </div>
      <div className="relative flex items-center justify-end pr-[31px] text-[#333]">
        <Btn label="显示隐藏的图标" className="h-12 w-12"><Icon size="size-4" sw={2.4}><path d="M1 18L12 7l11 11" /></Icon></Btn>
        <Btn label="OneDrive" className="h-12 w-12 text-black">
          <Icon sw={1.5}><path d="M6 9q2-5 7-4 4 1 5 5 5 0 5 5 0 4-5 4.500H6Q1 19 1 14.500 1 10 6 9z" fill="#999" /><path d="M3 17l11-5 7 6q-1 1-3 1H6q-2 0-3-2z" fill="#ddd" stroke="none" /></Icon>
        </Btn>
        <Btn label="输入法" className="h-12 w-12 text-[#555]">
          <Icon sw={1.4}><path d="M11 1h3v5h9v11h-9v6h-3v-6H1V6h10zM4 9h7v5H4zM14 9h6v5h-6z" /></Icon>
        </Btn>
        <Btn label="搜狗输入法" className="mr-[22px] ml-2 h-12 w-12">
          <svg viewBox="0 0 24 24" className="size-6" aria-hidden="true"><path d="M1 4Q1 3 2 2.700L19 1q1.500 0 2 1.500L24 18q0 2-1.500 2.500L6 23.500q-2 0-2.500-2z" fill="#ff5a1c" /><path d="M19 6Q7 5 6.500 9q0 2.500 6 3 7 .5 6.500 3.500Q17 19 7 18" fill="none" stroke="#eee" strokeWidth="3" /></svg>
        </Btn>
        <Btn label="网络、音量和电池" className="h-12 gap-[10px]">
          <Icon sw={1.6}><path d="M1 9q11-10 22 0M4.500 12.500q7.500-7 15 0M8 16q4-3.500 8 0" /><circle cx="12" cy="19" r="1.500" fill="currentColor" /></Icon>
          <Icon sw={1.6}><path d="M3 9h4l5-5v16l-5-5H3zM15.500 9q2 3 0 6M18.500 6q4.500 6 0 12" /></Icon>
          <Icon sw={1.6} size="size-7"><path d="M8 6h12q2 0 2 2v8q0 2-2 2H5q-2 0-2-2v-3M22 10h2v4h-2" /><path d="M8 9h11.500v6.500H6L8 12z" fill="currentColor" /><path d="M4 2L1 8h3v4l3-6H4z" fill="currentColor" strokeWidth=".5" /></Icon>
        </Btn>
        <div className="ml-6 text-right text-lg leading-6">
          <div>12:14</div>
          <div>2024/6/4</div>
        </div>
        <Btn label="通知" className="ml-[13px] h-12 w-5">
          <svg viewBox="0 0 20 24" className="h-6 w-5" aria-hidden="true"><path d="M10 1q7.500 0 7.500 8v6l2 3v1H.5v-1l2-3V9q0-8 7.500-8zM7 20.500h6q-.5 2.500-3 2.500t-3-2.500z" fill="#6b421d" /></svg>
        </Btn>
        <span className="absolute right-4 bottom-[-5px] font-['Liberation_Sans'] text-[13px] leading-4 text-[#ececec] [text-shadow:1px_1px_1px_#777,0_0_1px_#555]">CSDN @Gin387</span>
      </div>
    </footer>
  );
}

export default function App() {
  return (
    <div lang="zh-CN" className="flex h-screen flex-col overflow-hidden bg-[#f4cbcb] font-['Open_Sans','Noto_Sans_CJK_SC',sans-serif] text-[#141414]">
      <TitleBar />
      <AddressRow />
      <div className="flex min-h-0 flex-1">
        <TabStrip />
        <div className="flex min-w-0 flex-1 border-t-2 border-l border-[#cfa9a9]">
          <div className="flex min-w-0 flex-1 flex-col">
            <PdfToolbar />
            <Document />
          </div>
          <Scrollbar />
        </div>
        <EdgeSidebar />
      </div>
      <Taskbar />
    </div>
  );
}
